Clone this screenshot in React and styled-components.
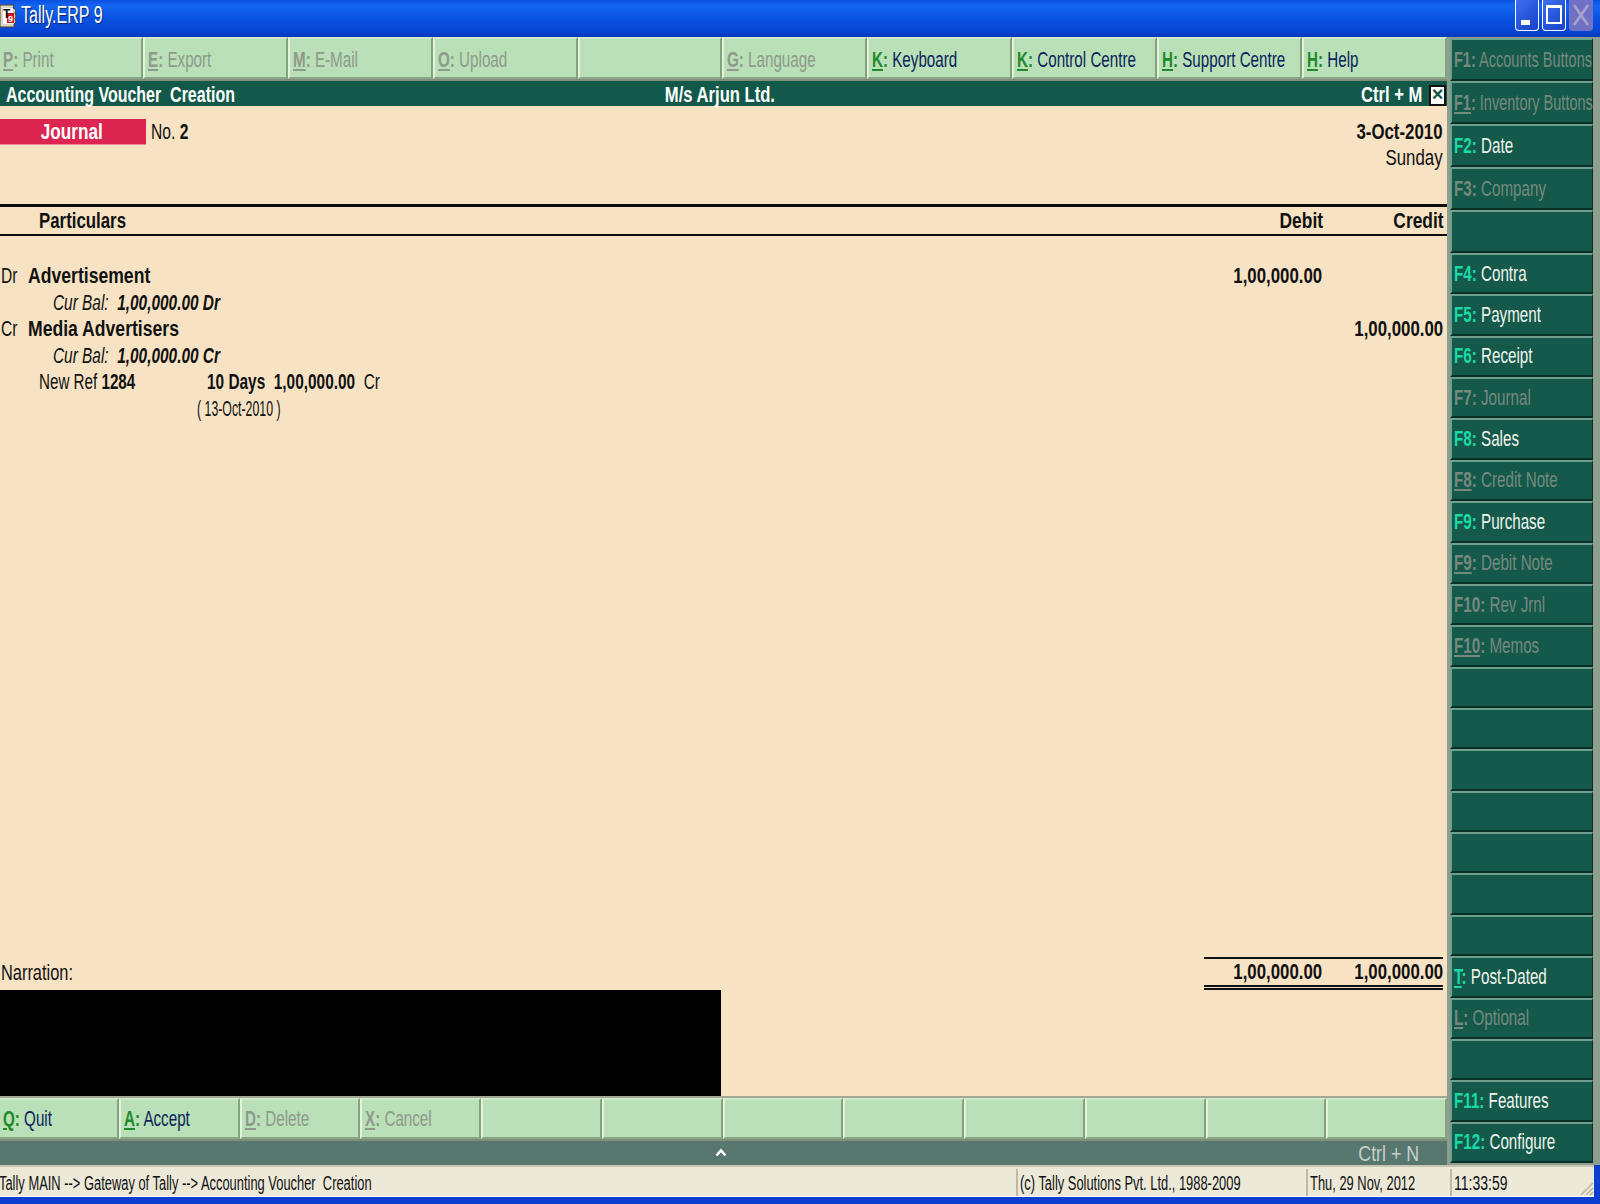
import styled, { createGlobalStyle } from "styled-components";

const GlobalStyle = createGlobalStyle`
  html, body { margin: 0; padding: 0; background: #0a3fd0; }
  * { box-sizing: border-box; }
  body { font-family: "Liberation Sans", Arial, sans-serif; }
`;

const topButtons = [
  { k: "P", label: "Print", off: true },
  { k: "E", label: "Export", off: true },
  { k: "M", label: "E-Mail", off: true },
  { k: "O", label: "Upload", off: true },
  {},
  { k: "G", label: "Language", off: true },
  { k: "K", label: "Keyboard" },
  { k: "K", label: "Control Centre" },
  { k: "H", label: "Support Centre" },
  { k: "H", label: "Help" },
];

const bottomButtons = [
  { k: "Q", label: "Quit" },
  { k: "A", label: "Accept" },
  { k: "D", label: "Delete", off: true },
  { k: "X", label: "Cancel", off: true },
  {}, {}, {}, {}, {}, {}, {}, {},
];

const sideButtons = [
  { k: "F1", label: "Accounts Buttons", off: true, sx: 0.66 },
  { k: "F1", label: "Inventory Buttons", off: true, u: true, sx: 0.66 },
  { k: "F2", label: "Date" },
  { k: "F3", label: "Company", off: true },
  {},
  { k: "F4", label: "Contra" },
  { k: "F5", label: "Payment" },
  { k: "F6", label: "Receipt" },
  { k: "F7", label: "Journal", off: true },
  { k: "F8", label: "Sales" },
  { k: "F8", label: "Credit Note", off: true, u: true },
  { k: "F9", label: "Purchase" },
  { k: "F9", label: "Debit Note", off: true, u: true },
  { k: "F10", label: "Rev Jrnl", off: true },
  { k: "F10", label: "Memos", off: true, u: true },
  {}, {}, {}, {}, {}, {}, {},
  { k: "T", label: "Post-Dated", u: true },
  { k: "L", label: "Optional", off: true, u: true },
  {},
  { k: "F11", label: "Features" },
  { k: "F12", label: "Configure" },
];

function TallyIcon() {
  return (
    <svg width="17" height="24" viewBox="0 0 17 24">
      <path d="M0 1h14l-1 3 3 2-1 3 1 3-1 3 1 3-2 2v3H0z" fill="#d9d4c4" stroke="#4a4038" strokeWidth="1" />
      <rect x="3" y="4" width="10" height="16" fill="#fff" />
      <rect x="7" y="9" width="7" height="10" fill="#d8121f" />
      <text x="3" y="14" fontSize="12" fontWeight="700" fontFamily="Liberation Sans" fill="#111">T</text>
      <text x="8" y="18" fontSize="9" fontWeight="700" fontFamily="Liberation Sans" fill="#fff">9</text>
    </svg>
  );
}

function KeyLabel({ k, label, off, u, side, sx }) {
  if (!k) return null;
  const underlined = u || !/^F\d/.test(k);
  return (
    <Txt $sx={sx || 0.69}>
      <Key $off={off} $side={side}>
        {underlined ? <u>{k}</u> : k}:
      </Key>{" "}
      <BtnLabel $off={off} $side={side}>{label}</BtnLabel>
    </Txt>
  );
}

export default function App() {
  return (
    <>
      <GlobalStyle />
      <Window>
        <TitleBar>
          <TitleLeft>
            <TallyIcon />
            <TitleText>Tally.ERP 9</TitleText>
          </TitleLeft>
          <WinButtons>
            <WinBtn>
              <svg width="22" height="30" viewBox="0 0 22 30">
                <rect x="5" y="20" width="9" height="5" fill="#fff" />
              </svg>
            </WinBtn>
            <WinBtn>
              <svg width="22" height="30" viewBox="0 0 22 30">
                <rect x="4" y="6" width="14" height="17" fill="none" stroke="#fff" strokeWidth="2" />
                <rect x="4" y="5" width="14" height="3" fill="#fff" />
              </svg>
            </WinBtn>
            <WinBtn $disabled>
              <svg width="22" height="30" viewBox="0 0 22 30">
                <path d="M4 5l14 20M18 5L4 25" stroke="#a9a4cf" strokeWidth="2.5" />
              </svg>
            </WinBtn>
          </WinButtons>
        </TitleBar>

        <Frame>
          <Main>
            <ButtonBar $count={10}>
              {topButtons.map((b, i) => (
                <BarButton key={i} $top><KeyLabel {...b} /></BarButton>
              ))}
            </ButtonBar>

            <HeaderBar>
              <HeaderLeft><HeaderTitle>Accounting Voucher  Creation</HeaderTitle></HeaderLeft>
              <HeaderCenter><HeaderText $align="center">M/s Arjun Ltd.</HeaderText></HeaderCenter>
              <HeaderRight>
                <HeaderText $align="right">Ctrl + M</HeaderText>
                <CloseBox>×</CloseBox>
              </HeaderRight>
            </HeaderBar>

            <Voucher>
              <VoucherTop>
                <VoucherType>
                  <TypeBadge><BadgeText $align="center">Journal</BadgeText></TypeBadge>
                  <VoucherNo><Txt>No. <b>2</b></Txt></VoucherNo>
                </VoucherType>
                <DateBlock>
                  <Txt $align="right" $sx={0.765}><b>3-Oct-2010</b></Txt>
                  <Txt $align="right" $sx={0.765}>Sunday</Txt>
                </DateBlock>
              </VoucherTop>

              <ColumnHead>
                <HeadName><Txt $sx={0.765}><b>Particulars</b></Txt></HeadName>
                <Amount><Txt $align="right" $sx={0.79}><b>Debit</b></Txt></Amount>
                <Amount><Txt $align="right" $sx={0.79}><b>Credit</b></Txt></Amount>
              </ColumnHead>

              <Entries>
                <EntryRow>
                  <DrCr><Txt>Dr</Txt></DrCr>
                  <LedgerName><Txt $sx={0.8}><b>Advertisement</b></Txt></LedgerName>
                  <Amount><Txt $align="right" $sx={0.765}><b>1,00,000.00</b></Txt></Amount>
                  <Amount />
                </EntryRow>
                <BalanceRow>
                  <Txt $sx={0.7}><i>Cur Bal:</i>  <b><i>1,00,000.00 Dr</i></b></Txt>
                </BalanceRow>
                <EntryRow>
                  <DrCr><Txt>Cr</Txt></DrCr>
                  <LedgerName><Txt $sx={0.8}><b>Media Advertisers</b></Txt></LedgerName>
                  <Amount />
                  <Amount><Txt $align="right" $sx={0.765}><b>1,00,000.00</b></Txt></Amount>
                </EntryRow>
                <BalanceRow>
                  <Txt $sx={0.7}><i>Cur Bal:</i>  <b><i>1,00,000.00 Cr</i></b></Txt>
                </BalanceRow>
                <RefRow>
                  <RefName><Txt $sx={0.69}>New Ref <b>1284</b></Txt></RefName>
                  <RefDays><Txt $sx={0.7}><b>10 Days  1,00,000.00</b>  Cr</Txt></RefDays>
                </RefRow>
                <DueRow><DueText>( 13-Oct-2010 )</DueText></DueRow>
              </Entries>

              <NarrationRow>
                <NarrationLabel><Txt $sx={0.745}>Narration:</Txt></NarrationLabel>
                <Totals>
                  <Amount $w={118}><Txt $align="right" $sx={0.765}><b>1,00,000.00</b></Txt></Amount>
                  <Amount><Txt $align="right" $sx={0.765}><b>1,00,000.00</b></Txt></Amount>
                </Totals>
              </NarrationRow>
              <NarrationBox />
            </Voucher>

            <ButtonBar $count={12} $bottom>
              {bottomButtons.map((b, i) => (
                <BarButton key={i}><KeyLabel {...b} /></BarButton>
              ))}
            </ButtonBar>

            <CtrlBar>
              <Caret>
                <svg width="12" height="9" viewBox="0 0 12 9">
                  <path d="M1.5 7.5L6 2.5l4.5 5" fill="none" stroke="#fff" strokeWidth="2.6" />
                </svg>
              </Caret>
              <CtrlText $align="right">Ctrl + N</CtrlText>
            </CtrlBar>
          </Main>

          <Side>
            {sideButtons.map((b, i) => (
              <SideButton key={i}><KeyLabel {...b} side /></SideButton>
            ))}
          </Side>
        </Frame>

        <StatusBar>
          <StatusPath><StatusText>Tally MAIN --&gt; Gateway of Tally --&gt; Accounting Voucher  Creation</StatusText></StatusPath>
          <StatusCopy><StatusText>(c) Tally Solutions Pvt. Ltd., 1988-2009</StatusText></StatusCopy>
          <StatusDate><StatusText>Thu, 29 Nov, 2012</StatusText></StatusDate>
          <StatusTime>
            <ClockText>11:33:59</ClockText>
            <Grip>
              <svg width="16" height="16" viewBox="0 0 16 16">
                <path d="M15 3L3 15M15 8l-7 7M15 12l-3 3" stroke="#b5b09c" strokeWidth="1.4" />
              </svg>
            </Grip>
          </StatusTime>
        </StatusBar>
      </Window>
    </>
  );
}

const Window = styled.div`
  width: 1600px;
  height: 1204px;
  display: flex;
  flex-direction: column;
  overflow: hidden;
  background: #0a3fd0;
`;

const TitleBar = styled.div`
  height: 37px;
  flex: none;
  display: flex;
  align-items: center;
  justify-content: space-between;
  padding-right: 7px;
  background: linear-gradient(to bottom, #0a4fe0 0%, #1466f0 15%, #0a52e4 50%, #0645d2 85%, #0438b8 100%);
`;

const TitleLeft = styled.div`
  display: flex;
  align-items: center;
  gap: 4px;
  margin-top: -6px;
`;

const TitleText = styled.span`
  color: #fff;
  font-size: 23px;
  display: inline-block;
  white-space: pre;
  transform: scaleX(0.7);
  transform-origin: left center;
  text-shadow: 1px 1px 1px #08206e;
`;

const WinButtons = styled.div`
  display: flex;
  gap: 3px;
  margin-top: -6px;
`;

const WinBtn = styled.div`
  width: 24px;
  height: 31px;
  border: 1px solid ${(p) => (p.$disabled ? "#6d74c8" : "#fff")};
  border-top: none;
  border-radius: 0 0 4px 4px;
  background: ${(p) => (p.$disabled ? "#6f72c4" : "linear-gradient(135deg, #3d6ff0, #1640c8)")};
  display: flex;
  align-items: center;
  justify-content: center;
`;

const Frame = styled.div`
  flex: none;
  height: 1128px;
  display: flex;
  background: #8f9f8f;
  padding-right: 6px;
`;

const Main = styled.div`
  width: 1447px;
  flex: none;
  display: flex;
  flex-direction: column;
`;

const Txt = styled.span`
  display: inline-block;
  white-space: pre;
  font-size: 22px;
  line-height: 26px;
  color: #111;
  transform: scaleX(${(p) => p.$sx || 0.71});
  transform-origin: ${(p) => p.$align || "left"} center;
`;

const Key = styled.span`
  font-weight: 700;
  color: ${(p) => (p.$off ? (p.$side ? "#74897f" : "#8f9a8d") : p.$side ? "#19d9a8" : "#1f8a2c")};
`;

const BtnLabel = styled.span`
  color: ${(p) => (p.$off ? (p.$side ? "#74897f" : "#8f9a8d") : p.$side ? "#f0f4ee" : "#0c1f5c")};
`;

const ButtonBar = styled.div`
  height: 44px;
  flex: none;
  margin-left: -2px;
  display: grid;
  grid-template-columns: repeat(${(p) => p.$count}, minmax(0, 1fr));
  background: #7f8f78;
  padding-bottom: 2px;
  ${(p) => p.$bottom && "border-top: 2px solid #a3a795; height: 45px;"}
`;

const BarButton = styled.div`
  background: #b9e0b6;
  border-top: 2px solid #cfe9cb;
  border-left: 2px solid #e3f3df;
  border-right: 2px solid #84a27e;
  border-bottom: 2px solid #8ba687;
  padding: ${(p) => (p.$top ? "3px 0 0 3px" : "0 0 0 3px")};
  display: flex;
  align-items: center;
  min-width: 0;
`;

const HeaderBar = styled.div`
  height: 25px;
  flex: none;
  background: #12594a;
  display: grid;
  grid-template-columns: minmax(0, 709px) 22px minmax(0, 1fr);
  align-items: center;
  padding-top: 1px;
`;

const HeaderText = styled(Txt)`
  color: #fff;
  font-weight: 700;
  transform: scaleX(0.755);
`;

const HeaderTitle = styled(HeaderText)`
  transform: scaleX(0.727);
`;

const HeaderLeft = styled.div`
  padding-left: 6px;
`;

const HeaderCenter = styled.div`
  display: flex;
  justify-content: center;
`;

const HeaderRight = styled.div`
  display: flex;
  justify-content: flex-end;
  align-items: center;
  gap: 7px;
  padding-right: 1px;
`;

const CloseBox = styled.span`
  width: 17px;
  height: 21px;
  background: #fff;
  border: 2px solid #111;
  color: #12594a;
  font-size: 20px;
  line-height: 15px;
  font-weight: 700;
  text-align: center;
`;

const Voucher = styled.div`
  flex: 1;
  min-height: 0;
  display: flex;
  flex-direction: column;
  background: #f7e3c4;
`;

const VoucherTop = styled.div`
  height: 98px;
  flex: none;
  display: flex;
  justify-content: space-between;
  padding: 13px 4px 0 0;
`;

const VoucherType = styled.div`
  display: flex;
  align-items: flex-start;
  gap: 5px;
`;

const TypeBadge = styled.div`
  width: 146px;
  height: 26px;
  background: #dc2550;
  border-bottom: 1px solid #f08a90;
  padding-right: 3px;
  display: flex;
  justify-content: center;
`;

const BadgeText = styled(Txt)`
  color: #fff;
  font-weight: 700;
  transform: scaleX(0.78);
`;

const VoucherNo = styled.div``;

const DateBlock = styled.div`
  display: flex;
  flex-direction: column;
  align-items: flex-end;
`;

const ColumnHead = styled.div`
  height: 32px;
  flex: none;
  display: flex;
  align-items: center;
  border-top: 3px solid #0c0c0c;
  border-bottom: 2px solid #0c0c0c;
  padding-right: 3px;
`;

const HeadName = styled.div`
  flex: 1;
  padding-left: 39px;
`;

const Amount = styled.div`
  width: ${(p) => p.$w || 121}px;
  flex: none;
  display: flex;
  justify-content: flex-end;
`;

const Entries = styled.div`
  flex: 1;
  padding: 27px 4px 0 1px;
  display: flex;
  flex-direction: column;
`;

const EntryRow = styled.div`
  height: 26.5px;
  display: flex;
  align-items: center;
`;

const DrCr = styled.div`
  width: 27px;
  flex: none;
`;

const LedgerName = styled.div`
  flex: 1;
`;

const BalanceRow = styled.div`
  height: 26.5px;
  padding-left: 52px;
  display: flex;
  align-items: center;
`;

const RefRow = styled.div`
  height: 26.5px;
  display: flex;
  align-items: center;
`;

const RefName = styled.div`
  width: 206px;
  flex: none;
  padding-left: 38px;
`;

const RefDays = styled.div``;

const DueRow = styled.div`
  height: 26.5px;
  padding-left: 196px;
  display: flex;
  align-items: center;
`;

const DueText = styled(Txt)`
  transform: scaleX(0.56);
`;

const NarrationRow = styled.div`
  height: 33px;
  flex: none;
  display: flex;
  align-items: center;
  justify-content: space-between;
  padding: 0 4px 0 1px;
`;

const NarrationLabel = styled.div`
  margin-top: -1px;
`;

const Totals = styled.div`
  width: 239px;
  height: 33px;
  display: flex;
  align-items: center;
  border-top: 2px solid #111;
  border-bottom: 5px double #111;
`;

const NarrationBox = styled.div`
  width: 721px;
  height: 106px;
  flex: none;
  background: #000;
`;

const CtrlBar = styled.div`
  height: 24px;
  flex: none;
  background: #57776f;
  position: relative;
  display: flex;
  align-items: center;
  justify-content: flex-end;
  padding: 1px 28px 0 0;
`;

const Caret = styled.span`
  position: absolute;
  left: 715px;
  top: 7px;
  display: flex;
`;

const CtrlText = styled(Txt)`
  color: #c5d0cb;
  transform: scaleX(0.81);
`;

const Side = styled.div`
  width: 147px;
  flex: none;
  display: grid;
  grid-template-rows: repeat(5, 43px) repeat(22, minmax(0, 1fr));
  background: #8f9f8f;
  padding: 1px 1px 2px 3px;
`;

const SideButton = styled.div`
  background: #14594a;
  border-top: 2px solid #6f9f8e;
  border-left: 2px solid #6f9f8e;
  border-bottom: 2px solid #0b3028;
  border-right: 1px solid #0b3028;
  display: flex;
  align-items: center;
  padding-left: 2px;
  min-width: 0;
`;

const StatusBar = styled.div`
  height: 32px;
  flex: none;
  margin-right: 6px;
  display: flex;
  background: #ece9d8;
  border-top: 2px solid #c9c5b2;
  border-bottom: 1px solid #fff;
  padding-top: 2px;
`;

const StatusText = styled(Txt)`
  font-size: 20px;
  transform: scaleX(0.645);
`;

const ClockText = styled(StatusText)`
  transform: scaleX(0.7);
`;

const StatusPath = styled.div`
  width: 1017px;
  flex: none;
  margin-left: -1px;
  display: flex;
  align-items: center;
`;

const StatusCell = styled.div`
  flex: none;
  display: flex;
  align-items: center;
  border-left: 2px solid #bdb9a6;
  padding-left: 2px;
`;

const StatusCopy = styled(StatusCell)`
  width: 290px;
`;

const StatusDate = styled(StatusCell)`
  width: 144px;
`;

const StatusTime = styled(StatusCell)`
  flex: 1;
  position: relative;
`;

const Grip = styled.span`
  position: absolute;
  right: 0;
  bottom: 0;
  display: flex;
`;
